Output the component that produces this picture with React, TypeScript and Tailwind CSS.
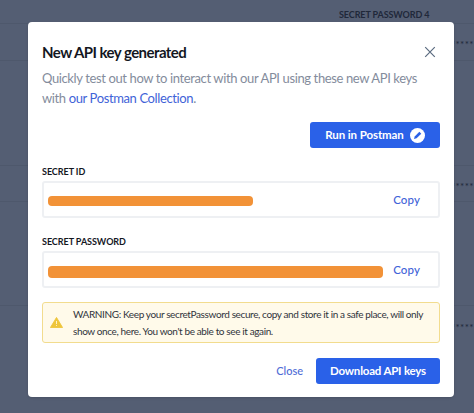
import React from "react";

function Row({ h, border = true, children }: { h: string; border?: boolean; children?: React.ReactNode }) {
  return (
    <div className={`${h} ${border ? "border-b border-[#4e586c]" : ""} flex items-center justify-end overflow-hidden`}>
      {children}
    </div>
  );
}

function Stars() {
  return <span className="mt-1 whitespace-nowrap text-[10px] leading-none tracking-[0.4px] text-[#20283a]">*****</span>;
}

function KeyField({ barW, barH, barOffset }: { barW: string; barH: string; barOffset: string }) {
  return (
    <div className="flex h-[37px] items-center rounded-[3px] border-2 border-[#eef0f3] bg-white pl-[4px] pr-[18px]">
      <div className="flex min-w-0 flex-1 items-center">
        <div className={`${barW} ${barH} ${barOffset} rounded-[4px] bg-[#f29237]`} />
      </div>
      <span className="text-[11.5px] font-medium tracking-[0.1px] text-[#3f63d8]">Copy</span>
    </div>
  );
}

export default function App() {
  return (
    <div className="relative h-[413px] w-[474px] overflow-hidden bg-[#545e73] font-['Lato','Noto_Sans',sans-serif]">
      <div className="flex flex-col">
        <Row h="h-[24px]" />
        <Row h="h-[37px]"><Stars /></Row>
        <Row h="h-[105px]" />
        <Row h="h-[36px]"><Stars /></Row>
        <Row h="h-[104px]" />
        <Row h="h-[37px]" border={false}><Stars /></Row>
      </div>
      <div className="absolute left-[339px] top-[10px] whitespace-nowrap text-[9px] font-bold leading-[10px] tracking-[-0.1px] text-[#20283a]">SECRET PASSWORD 4</div>

      <div className="absolute left-[28px] top-[22px] h-[375px] w-[426px] rounded-[4px] bg-white px-[14px] pt-[18px] shadow-sm">
        <div className="flex items-center justify-between pr-[3px]">
          <h2 className="text-[15px] font-bold leading-[24px] tracking-[-0.55px] text-[#14171f]">New API key generated</h2>
          <svg viewBox="0 0 12 12" className="mr-[1px] h-[12px] w-[12px] text-[#5b6b80]" fill="none" stroke="currentColor" strokeWidth="1.2">
            <path d="M1.2 1.2 10.8 10.8M10.8 1.2 1.2 10.8" />
          </svg>
        </div>
        <p className="mt-[5px] text-[13px] leading-[19.5px] tracking-[-0.38px] text-[#848c9c]">
          Quickly test out how to interact with our API using these new API keys with <span className="text-[#3f63d8]">our Postman Collection</span>.
        </p>

        <div className="mt-[14px] flex justify-end">
          <div className="flex h-[26px] w-[130px] items-center justify-center gap-[6px] rounded-[3px] bg-[#2a61e8] text-[11.5px] font-bold tracking-[-0.1px] text-white">
            <span>Run in Postman</span>
            <svg viewBox="0 0 16 16" className="h-[15px] w-[15px]">
              <circle cx="8" cy="8" r="8" fill="#fff" />
              <path d="M4.2 11.8 5 9l5-5 2 2-5 5z" fill="#2a61e8" />
            </svg>
          </div>
        </div>

        <div className="mt-[17px] text-[9px] font-bold leading-[14px] tracking-[-0.05px] text-[#14171f]">SECRET ID</div>
        <div className="mt-[2px]"><KeyField barW="w-[205px]" barH="h-[10px]" barOffset="mt-[3px]" /></div>

        <div className="mt-[17px] text-[9px] font-bold leading-[14px] tracking-[-0.05px] text-[#14171f]">SECRET PASSWORD</div>
        <div className="mt-[2px]"><KeyField barW="w-[335px]" barH="h-[12px]" barOffset="mt-[5px]" /></div>

        <div className="mt-[14px] flex h-[41px] items-center gap-[10px] rounded-[3px] border border-[#f2dc8e] bg-[#fffaea] pl-[7px] pr-[8px]">
          <svg viewBox="0 0 14 12" className="h-[11px] w-[13px] shrink-0">
            <path d="M7 .5 13.6 11.5H.4z" fill="#eec53c" stroke="#eec53c" strokeLinejoin="round" />
            <path d="M7 4.3v3.4M7 8.8v1" stroke="#fff6d8" strokeWidth="1" />
          </svg>
          <p className="text-[10px] leading-[16.5px] tracking-[-0.38px] text-[#30343c]">
            WARNING: Keep your secretPassword secure, copy and store it in a safe place, will only show once, here. You won't be able to see it again.
          </p>
        </div>

        <div className="mt-[15px] flex items-center justify-end gap-[13px]">
          <span className="text-[11px] font-medium text-[#4f6cd6]">Close</span>
          <div className="flex h-[26px] w-[124px] items-center justify-center rounded-[3px] bg-[#2a61e8] text-[11.5px] font-bold tracking-[-0.2px] text-white">Download API keys</div>
        </div>
      </div>
    </div>
  );
}
